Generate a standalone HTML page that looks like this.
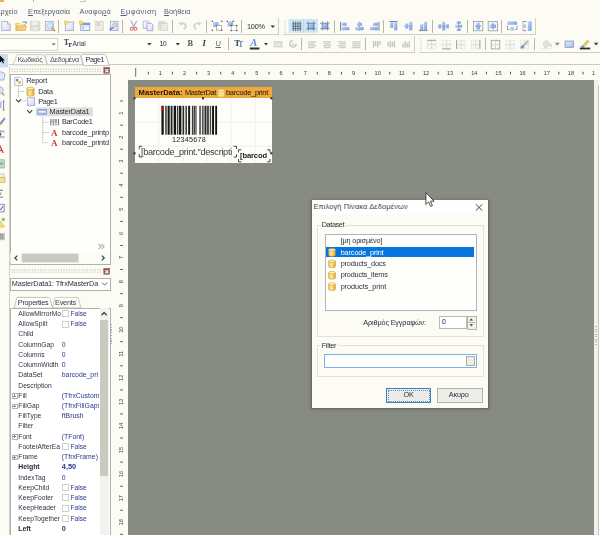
<!DOCTYPE html>
<html><head><meta charset="utf-8"><title>FastReport</title>
<style>
html,body{margin:0;padding:0;background:#fcfcf5}
#root{position:absolute;left:0;top:0;width:600px;height:535px;filter:blur(0.3px)}
body{width:600px;height:535px;overflow:hidden;position:relative;background:#fcfcf5;font-family:"Liberation Sans","DejaVu Sans",sans-serif;font-size:7.2px;color:#3a4150}
.ab{position:absolute}
.t{position:absolute;white-space:nowrap;line-height:10px}
svg{overflow:visible}
</style></head><body><div id="root">

<div class="t" style="left:8px;top:-6.60px;font-size:7.5px;color:#8e929a;letter-spacing:0.051px;">FastReport - barcode_print.fr3</div>
<div class="ab" style="left:0px;top:0px;width:3.5px;height:2.2px;background:#e8b060;"></div>
<div class="t" style="left:-4.5px;top:6.50px;font-size:7.4px;color:#55607a;">Αρχείο</div>
<div class="t" style="left:28px;top:6.50px;font-size:7.4px;color:#55607a;letter-spacing:-0.057px;"><u>Ε</u>πεξεργασία</div>
<div class="t" style="left:79.5px;top:6.50px;font-size:7.4px;color:#55607a;letter-spacing:0.188px;">Αναφο<u>ρ</u>ά</div>
<div class="t" style="left:120.5px;top:6.50px;font-size:7.4px;color:#55607a;letter-spacing:0.462px;"><u>Ε</u>μφάνιση</div>
<div class="t" style="left:164px;top:6.50px;font-size:7.4px;color:#55607a;letter-spacing:-0.001px;"><u>Β</u>οήθεια</div>
<div class="ab" style="left:0px;top:33.5px;width:279px;height:1px;background:#cfcfc4;"></div>
<div class="ab" style="left:278px;top:18px;width:1px;height:16px;background:#cfcfc4;"></div>
<div class="ab" style="left:283px;top:33.5px;width:253px;height:1px;background:#cfcfc4;"></div>
<div class="ab" style="left:535px;top:18px;width:1px;height:16px;background:#cfcfc4;"></div>
<div class="ab" style="left:0px;top:52px;width:414px;height:1px;background:#cfcfc4;"></div>
<div class="ab" style="left:414px;top:36px;width:1px;height:17px;background:#cfcfc4;"></div>
<div class="ab" style="left:419px;top:52px;width:181px;height:1px;background:#cfcfc4;"></div>
<div class="ab" style="left:128px;top:80.3px;width:466.3px;height:455px;background:#888b82;"></div>
<div class="ab" style="left:594.3px;top:80px;width:4px;height:455px;background:#f1f1e8;"></div>
<div class="ab" style="left:598.2px;top:85.4px;width:2px;height:450px;background:#ffffff;"></div>
<div class="ab" style="left:598px;top:85.4px;width:0.6px;height:450px;background:#c4c4ba;"></div>
<div class="ab" style="left:595.2px;top:326.0px;width:2px;height:1.3px;background:#b4b9bc;"></div>
<div class="ab" style="left:595.2px;top:328.5px;width:2px;height:1.3px;background:#b4b9bc;"></div>
<div class="ab" style="left:595.2px;top:331.0px;width:2px;height:1.3px;background:#b4b9bc;"></div>
<div class="ab" style="left:595.2px;top:333.5px;width:2px;height:1.3px;background:#b4b9bc;"></div>
<div class="ab" style="left:595.2px;top:336.0px;width:2px;height:1.3px;background:#b4b9bc;"></div>
<div class="ab" style="left:595.2px;top:338.5px;width:2px;height:1.3px;background:#b4b9bc;"></div>
<div class="ab" style="left:595.2px;top:341.0px;width:2px;height:1.3px;background:#b4b9bc;"></div>
<div class="ab" style="left:595.2px;top:343.5px;width:2px;height:1.3px;background:#b4b9bc;"></div>
<svg class="ab" style="left:0;top:0;opacity:0.880" width="600" height="56" viewBox="0 0 600 56">
<defs><linearGradient id="gb" x1="0" y1="0" x2="1" y2="1"><stop offset="0" stop-color="#c3d4f8"/><stop offset="1" stop-color="#5f8ae0"/></linearGradient><linearGradient id="gp" x1="0" y1="0" x2="1" y2="1"><stop offset="0" stop-color="#ffffff"/><stop offset="1" stop-color="#cfd4f3"/></linearGradient><linearGradient id="gf" x1="0" y1="0" x2="0" y2="1"><stop offset="0" stop-color="#f6d77a"/><stop offset="1" stop-color="#e09a28"/></linearGradient></defs>
<path d="M1.7 21.5h5.8l2.7 2.7v6.3h-8.5z" fill="url(#gp)" stroke="#8e99cf" stroke-width="0.8"/><path d="M7.5 21.5v2.7h2.7" fill="#e8ebfa" stroke="#8e99cf" stroke-width="0.6"/>
<path d="M15.8 23.300h3.600l1 1h5v6h-9.600z" fill="url(#gf)" stroke="#c99a3f" stroke-width="0.5"/><path d="M15.800 30.300l1.500-4.200h9.500l-1.300 4.200z" fill="#f3c766" stroke="#c99a3f" stroke-width="0.4"/><path d="M17 24.800h7" stroke="#fff3c8" stroke-width="0.800"/><path d="M22 22.2q2-1.6 4.2-.4l.6-.9.4 2.6-2.5-.3.7-.7q-1.6-.8-3.400.2z" fill="#5d86d6"/>
<rect x="30.3" y="21.3" width="9.6" height="9.4" rx="0.8" fill="#d6d8ce" stroke="#c6c9bd" stroke-width="0.6"/><rect x="32" y="21.6" width="6" height="3.4" fill="#eeefe8"/><rect x="32.4" y="26.8" width="5.400" height="3.600" fill="#e6e7de"/>
<rect x="45.3" y="21.3" width="8" height="9.2" fill="url(#gp)" stroke="#8e99cf" stroke-width="0.8"/><circle cx="49.8" cy="25.6" r="2.9" fill="#cfe6f8" stroke="#9fbfe4" stroke-width="0.8"/><path d="M52 28l2.600 2.600" stroke="#c98a3a" stroke-width="1.5" stroke-linecap="round"/>
<rect x="65.6" y="22" width="7.8" height="8.6" fill="url(#gp)" stroke="#8e99cf" stroke-width="0.8"/><rect x="64.300" y="21" width="3.2" height="3.2" fill="#f7dc55" stroke="#e3b52d" stroke-width="0.5"/>
<rect x="80.800" y="23" width="9" height="7.6" fill="#eef1fb" stroke="#6f92d6" stroke-width="0.8"/><rect x="80.800" y="23" width="9" height="2.2" fill="#6f92d6"/><rect x="82" y="26.300" width="2.2" height="3" fill="#a9c3f5"/><rect x="79.300" y="21" width="3.2" height="3.2" fill="#f7dc55" stroke="#e3b52d" stroke-width="0.5"/>
<rect x="95.300" y="21.400" width="8" height="9.200" fill="#e8e9e1" stroke="#cdcfc4" stroke-width="0.7"/><path d="M95.600 21.200l4.800 4.800M101 21.200l-4.800 4.800" stroke="#b9bbb0" stroke-width="0.9"/>
<rect x="110.500" y="21.300" width="7.5" height="9.300" fill="url(#gp)" stroke="#8e99cf" stroke-width="0.8"/><circle cx="114.600" cy="24.800" r="2" fill="#d7d9d0" stroke="#9a9c92" stroke-width="0.7"/><path d="M108.800 29.500q1.500-3 4.500-2.500l.8 1.600q-2.500 0-3.200 2.200z" fill="#5d86d6"/>
<path d="M131.200 21.200l3 6.200M136.500 21.200l-3 6.200" stroke="#8fb0e4" stroke-width="1.300" stroke-linecap="round"/><circle cx="131.800" cy="28.700" r="1.500" fill="none" stroke="#d65a5a" stroke-width="1.100"/><circle cx="135.400" cy="28.700" r="1.500" fill="none" stroke="#d65a5a" stroke-width="1.100"/>
<path d="M143.300 21h4.200l1.700 1.700v5.800h-5.900z" fill="url(#gp)" stroke="#8e99cf" stroke-width="0.7"/><path d="M147 23.200h4.200l1.700 1.700v5.800h-5.900z" fill="url(#gp)" stroke="#7b88c6" stroke-width="0.7"/>
<rect x="158.300" y="21.500" width="7" height="8.500" rx="0.6" fill="#d9dbd0" stroke="#c6c8bd" stroke-width="0.6"/><rect x="161" y="23.300" width="6.800" height="7.300" fill="#e9eae2" stroke="#c6c8bd" stroke-width="0.6"/>
<path d="M180 24.200q3.500-1.800 5.400.6q1.200 2.200-1.500 4.600" fill="none" stroke="#cbcdc2" stroke-width="1.800"/><path d="M178.200 22.800l3.600-.8-.5 3.700z" fill="#cbcdc2"/>
<path d="M200 24.200q-3.500-1.800-5.400.6q-1.200 2.200 1.500 4.600" fill="none" stroke="#cbcdc2" stroke-width="1.800"/><path d="M201.800 22.800l-3.600-.8.500 3.700z" fill="#cbcdc2"/>
<rect x="213" y="22" width="5.500" height="5" fill="url(#gb)"/><rect x="216.500" y="25.500" width="5" height="4.600" fill="#fff" stroke="#555" stroke-width="0.500"/>
<rect x="211.7" y="20.6" width="1.300" height="1.300" fill="#333"/>
<rect x="221.1" y="20.6" width="1.300" height="1.300" fill="#333"/>
<rect x="211.7" y="29.6" width="1.300" height="1.300" fill="#333"/>
<rect x="221.1" y="29.6" width="1.300" height="1.300" fill="#333"/>
<rect x="227.500" y="21.500" width="5.500" height="4.800" fill="url(#gb)"/><rect x="231.300" y="25.800" width="5.200" height="4.600" fill="#fff" stroke="#666" stroke-width="0.400"/>
<rect x="230.4" y="24.9" width="1.300" height="1.300" fill="#333"/>
<rect x="236.2" y="24.9" width="1.300" height="1.300" fill="#333"/>
<rect x="230.4" y="29.9" width="1.300" height="1.300" fill="#333"/>
<rect x="236.2" y="29.9" width="1.300" height="1.300" fill="#333"/>
<rect x="226.7" y="20.7" width="1.300" height="1.300" fill="#333"/>
<rect x="232.6" y="20.7" width="1.300" height="1.300" fill="#333"/>
<path d="M270.500 25.400h4.600l-2.300 2.600z" fill="#222"/>
<rect x="284.600" y="20" width="1" height="1" fill="#c3c3b8"/>
<rect x="284.600" y="22" width="1" height="1" fill="#c3c3b8"/>
<rect x="284.600" y="24" width="1" height="1" fill="#c3c3b8"/>
<rect x="284.600" y="26" width="1" height="1" fill="#c3c3b8"/>
<rect x="284.600" y="28" width="1" height="1" fill="#c3c3b8"/>
<rect x="284.600" y="30" width="1" height="1" fill="#c3c3b8"/>
<rect x="284.600" y="32" width="1" height="1" fill="#c3c3b8"/>
<rect x="288.500" y="19" width="29.600" height="13.700" fill="#c5e2f8"/><rect x="303.200" y="19" width="0.700" height="13.700" fill="#a9d0ee"/>
<path d="M293.3 21.500v9.500" stroke="#3d4650" stroke-width="0.900"/>
<path d="M295.6 21.500v9.500" stroke="#3d4650" stroke-width="0.900"/>
<path d="M297.9 21.500v9.500" stroke="#3d4650" stroke-width="0.900"/>
<path d="M300.2 21.500v9.500" stroke="#3d4650" stroke-width="0.900"/>
<path d="M292 23.8h9.500" stroke="#4a535e" stroke-width="0.800"/>
<path d="M292 26.2h9.500" stroke="#4a535e" stroke-width="0.800"/>
<path d="M292 28.6h9.500" stroke="#4a535e" stroke-width="0.800"/>
<rect x="307.300" y="22.400" width="7.200" height="7.200" fill="url(#gb)"/>
<path d="M308.3 21.300v9.600" stroke="#4a535e" stroke-width="0.700" opacity="0.800"/>
<path d="M313.7 21.300v9.600" stroke="#4a535e" stroke-width="0.700" opacity="0.800"/>
<path d="M306.200 23.3h9.600" stroke="#4a535e" stroke-width="0.700" opacity="0.800"/>
<path d="M306.200 28.7h9.600" stroke="#4a535e" stroke-width="0.700" opacity="0.800"/>
<rect x="321.600" y="22.600" width="6.800" height="6.800" fill="url(#gb)"/>
<path d="M322.3 21.300v9.600" stroke="#4a535e" stroke-width="0.800" stroke-dasharray="1.500 0.800"/>
<path d="M327.7 21.300v9.600" stroke="#4a535e" stroke-width="0.800" stroke-dasharray="1.500 0.800"/>
<path d="M320.200 23.3h9.600" stroke="#4a535e" stroke-width="0.800" stroke-dasharray="1.500 0.800"/>
<path d="M320.200 28.7h9.600" stroke="#4a535e" stroke-width="0.800" stroke-dasharray="1.500 0.800"/>
<path d="M340.500 21.800v9" stroke="#555" stroke-width="0.800"/><rect x="341.500" y="22.500" width="5" height="3.300" fill="url(#gb)"/><rect x="341.500" y="26.800" width="7.800" height="3.400" fill="url(#gb)"/>
<path d="M359.500 21.800v9" stroke="#555" stroke-width="0.700"/><rect x="357" y="22.500" width="5" height="3.300" fill="url(#gb)"/><rect x="355.300" y="26.800" width="8.400" height="3.400" fill="url(#gb)"/>
<path d="M379 21.800v9" stroke="#555" stroke-width="0.800"/><rect x="373" y="22.500" width="5" height="3.300" fill="url(#gb)"/><rect x="370" y="26.800" width="8" height="3.400" fill="url(#gb)"/>
<path d="M389.200 21.500h8.500" stroke="#555" stroke-width="0.800"/><rect x="390" y="22.300" width="3.200" height="5.500" fill="url(#gb)"/><rect x="394" y="22.300" width="3.300" height="8" fill="url(#gb)"/>
<path d="M404.200 26h8.500" stroke="#555" stroke-width="0.600"/><rect x="405" y="23.500" width="3.200" height="5" fill="url(#gb)"/><rect x="409" y="21.800" width="3.300" height="8.500" fill="url(#gb)"/>
<path d="M418.800 30.600h8.800" stroke="#555" stroke-width="0.800"/><rect x="420" y="24.300" width="3.200" height="5.700" fill="url(#gb)"/><rect x="423.800" y="21.800" width="3.300" height="8.200" fill="url(#gb)"/>
<rect x="438.300" y="24" width="2.600" height="4.500" fill="url(#gb)"/><rect x="442" y="21.800" width="3.200" height="8.600" fill="url(#gb)"/><rect x="446.200" y="24" width="2.600" height="4.500" fill="url(#gb)"/><path d="M438 26.200h11" stroke="#666" stroke-width="0.500"/>
<rect x="456.500" y="21.300" width="4.500" height="2.400" fill="url(#gb)"/><rect x="455.200" y="24.700" width="7" height="2.800" fill="url(#gb)"/><rect x="456.500" y="28.500" width="4.500" height="2.400" fill="url(#gb)"/><path d="M458.700 21v10" stroke="#666" stroke-width="0.500"/>
<rect x="473.400" y="21.400" width="9.400" height="9.400" fill="#f4f6f2" stroke="#7f9098" stroke-width="0.800"/><rect x="476.400" y="22.800" width="3.400" height="6.600" fill="url(#gb)"/><rect x="475.500" y="25" width="5.200" height="2.200" fill="#7ba0ea"/>
<rect x="488.200" y="21.400" width="9.400" height="9.400" fill="#f4f6f2" stroke="#7f9098" stroke-width="0.800"/><rect x="489.800" y="24.400" width="6.200" height="3.400" fill="url(#gb)"/><rect x="491.800" y="23.300" width="2.200" height="5.600" fill="#7ba0ea"/>
<rect x="507.300" y="21.300" width="9.800" height="3.400" fill="url(#gb)"/><rect x="510.300" y="26.800" width="3.800" height="3.800" fill="#a9c3f5"/><path d="M507.500 25.500v4h2M517 25.500v4h-2" stroke="#444" stroke-width="0.600" fill="none"/>
<rect x="527.800" y="21.300" width="3.800" height="9.600" fill="url(#gb)"/><rect x="522.300" y="24.300" width="3.800" height="3.800" fill="#a9c3f5"/><path d="M526.500 21.500h-3.500v2M526.500 30.700h-3.500v-2" stroke="#444" stroke-width="0.600" fill="none"/>
<rect x="-1" y="38.600" width="58.700" height="11.700" fill="#fefefb" stroke="#c4c4b9" stroke-width="0.800"/><path d="M51.500 43.300h4.400l-2.200 2.500z" fill="#777a80"/>
<rect x="60" y="36.500" width="95" height="14.500" fill="#fefefa"/><rect x="156" y="36.500" width="26" height="14.500" fill="#fefefa"/>
<path d="M147.200 43h4.400l-2.200 2.600z" fill="#222"/><path d="M175.600 43h4.400l-2.200 2.600z" fill="#222"/><path d="M264 43h4l-2 2.500z" fill="#222"/>
<rect x="249.800" y="47.500" width="9.600" height="2" fill="#111"/>
<rect x="273.800" y="41" width="8.600" height="6.500" fill="#d3d5ca"/><rect x="275.300" y="42.600" width="2" height="3.300" fill="#e8e9e0"/><rect x="278.500" y="42.600" width="2" height="3.300" fill="#e8e9e0"/>
<circle cx="293" cy="43.800" r="3.200" fill="none" stroke="#c6c8bd" stroke-width="1.500" stroke-dasharray="15 5"/><path d="M289 44h3.500v-1.500l2.500 2-2.500 2v-1.300h-3.500z" fill="#d8d9cf"/>
<rect x="308.0" y="41.4" width="8.2" height="1.100" fill="#bdbfb4"/>
<rect x="308.0" y="43.3" width="6.5" height="1.100" fill="#bdbfb4"/>
<rect x="308.0" y="45.2" width="8.2" height="1.100" fill="#bdbfb4"/>
<rect x="308.0" y="47.1" width="6.5" height="1.100" fill="#bdbfb4"/>
<rect x="323.0" y="41.4" width="8.2" height="1.100" fill="#bdbfb4"/>
<rect x="324.1" y="43.3" width="6" height="1.100" fill="#bdbfb4"/>
<rect x="323.0" y="45.2" width="8.2" height="1.100" fill="#bdbfb4"/>
<rect x="324.1" y="47.1" width="6" height="1.100" fill="#bdbfb4"/>
<rect x="337.6" y="41.4" width="8.2" height="1.100" fill="#bdbfb4"/>
<rect x="339.3" y="43.3" width="6.5" height="1.100" fill="#bdbfb4"/>
<rect x="337.6" y="45.2" width="8.2" height="1.100" fill="#bdbfb4"/>
<rect x="339.3" y="47.1" width="6.5" height="1.100" fill="#bdbfb4"/>
<rect x="352.3" y="41.4" width="8.2" height="1.100" fill="#bdbfb4"/>
<rect x="352.3" y="43.3" width="8.2" height="1.100" fill="#bdbfb4"/>
<rect x="352.3" y="45.2" width="8.2" height="1.100" fill="#bdbfb4"/>
<rect x="352.3" y="47.1" width="8.2" height="1.100" fill="#bdbfb4"/>
<rect x="373.0" y="41.0" width="1.200" height="6.5" fill="#b4b6ab"/>
<rect x="375.1" y="41.0" width="1.200" height="5" fill="#b4b6ab"/>
<rect x="377.2" y="41.0" width="1.200" height="6.5" fill="#b4b6ab"/>
<rect x="379.3" y="41.0" width="1.200" height="4" fill="#b4b6ab"/>
<rect x="387.5" y="42.0" width="1.200" height="4.5" fill="#b4b6ab"/>
<rect x="389.6" y="41.0" width="1.200" height="6.5" fill="#b4b6ab"/>
<rect x="391.7" y="41.8" width="1.200" height="5" fill="#b4b6ab"/>
<rect x="393.8" y="41.0" width="1.200" height="6.5" fill="#b4b6ab"/>
<rect x="402.3" y="43.6" width="1.200" height="4" fill="#b4b6ab"/>
<rect x="404.4" y="41.1" width="1.200" height="6.5" fill="#b4b6ab"/>
<rect x="406.5" y="42.6" width="1.200" height="5" fill="#b4b6ab"/>
<rect x="408.6" y="41.1" width="1.200" height="6.5" fill="#b4b6ab"/>
<rect x="420.500" y="38" width="1" height="1" fill="#c3c3b8"/>
<rect x="420.500" y="40" width="1" height="1" fill="#c3c3b8"/>
<rect x="420.500" y="42" width="1" height="1" fill="#c3c3b8"/>
<rect x="420.500" y="44" width="1" height="1" fill="#c3c3b8"/>
<rect x="420.500" y="46" width="1" height="1" fill="#c3c3b8"/>
<rect x="420.500" y="48" width="1" height="1" fill="#c3c3b8"/>
<rect x="420.500" y="50" width="1" height="1" fill="#c3c3b8"/>
<rect x="427.3" y="40.3" width="8.6" height="8.6" fill="#f7f8f3" stroke="#d0d2c8" stroke-width="0.700" stroke-dasharray="1 0.600"/>
<path d="M431.6 40.3v8.6M427.3 44.6h8.6" stroke="#cfd1c6" stroke-width="0.800"/>
<path d="M427.3 40.3h8.6" stroke="#8a9aa0" stroke-width="1"/>
<rect x="442.2" y="40.3" width="8.6" height="8.6" fill="#f7f8f3" stroke="#d0d2c8" stroke-width="0.700" stroke-dasharray="1 0.600"/>
<path d="M446.5 40.3v8.6M442.2 44.6h8.6" stroke="#cfd1c6" stroke-width="0.800"/>
<path d="M442.2 48.9h8.6" stroke="#8a9aa0" stroke-width="1"/>
<rect x="456.6" y="40.3" width="8.6" height="8.6" fill="#f7f8f3" stroke="#d0d2c8" stroke-width="0.700" stroke-dasharray="1 0.600"/>
<path d="M460.9 40.3v8.6M456.6 44.6h8.6" stroke="#cfd1c6" stroke-width="0.800"/>
<path d="M456.6 40.3v8.6" stroke="#8a9aa0" stroke-width="1"/>
<rect x="471.3" y="40.3" width="8.6" height="8.6" fill="#f7f8f3" stroke="#d0d2c8" stroke-width="0.700" stroke-dasharray="1 0.600"/>
<path d="M475.6 40.3v8.6M471.3 44.6h8.6" stroke="#cfd1c6" stroke-width="0.800"/>
<path d="M479.90000000000003 40.3v8.6" stroke="#8a9aa0" stroke-width="1"/>
<rect x="491.2" y="40.3" width="8.6" height="8.6" fill="#f7f8f3" stroke="#d0d2c8" stroke-width="0.700" stroke-dasharray="1 0.600"/>
<path d="M495.5 40.3v8.6M491.2 44.6h8.6" stroke="#cfd1c6" stroke-width="0.800"/>
<rect x="491.2" y="40.3" width="8.6" height="8.6" fill="none" stroke="#8c9ca2" stroke-width="0.800"/>
<rect x="505.8" y="40.3" width="8.6" height="8.6" fill="#f7f8f3" stroke="#d0d2c8" stroke-width="0.700" stroke-dasharray="1 0.600"/>
<path d="M510.1 40.3v8.6M505.8 44.6h8.6" stroke="#cfd1c6" stroke-width="0.800"/>
<rect x="520.3" y="40.3" width="8.6" height="8.6" fill="#f7f8f3" stroke="#d0d2c8" stroke-width="0.700" stroke-dasharray="1 0.600"/>
<path d="M524.6 40.3v8.6M520.3 44.6h8.6" stroke="#cfd1c6" stroke-width="0.800"/>
<path d="M521.500 47.500l6-6" stroke="#b0b2a8" stroke-width="2.200" stroke-linecap="round"/><circle cx="522.300" cy="47" r="1.600" fill="#4f7fe0"/>
<path d="M543 43.500l3.500-3.500 4 4-3.800 3.800h-2z" fill="#dfe0d7" stroke="#c3c5ba" stroke-width="0.700"/><path d="M550.500 43.500q1.800 1.500.600 4q-1.300-1.600-.600-4z" fill="#b9bbb0"/><rect x="541" y="48.300" width="10" height="0.900" fill="#d9e6cf"/>
<path d="M554.800 42.800h5l-2.500 3z" fill="#7d6f9c"/>
<rect x="565" y="41" width="8.600" height="6.400" fill="url(#gb)" stroke="#7d8cc4" stroke-width="0.700"/><rect x="565.800" y="41.800" width="7" height="4.800" fill="#dfe8fb" opacity="0.600"/>
<path d="M582 46l5.500-6 1.800 1.500-5.500 6z" fill="#e7bf5a" stroke="#b98f35" stroke-width="0.400"/><path d="M580.500 46.800l2-1.500 1.700 1.500-1.500 1.200z" fill="#5d86d6"/><rect x="579.800" y="47.600" width="10.400" height="1.800" fill="#111"/>
<path d="M593.800 42.800h4.600l-2.300 2.800z" fill="#222"/>
</svg>
<div class="ab" style="left:58.25px;top:19.5px;width:1px;height:13.0px;background:#b6b6aa;"></div>
<div class="ab" style="left:122.4px;top:19.5px;width:1px;height:13.0px;background:#b6b6aa;"></div>
<div class="ab" style="left:172.0px;top:19.5px;width:1px;height:13.0px;background:#b6b6aa;"></div>
<div class="ab" style="left:206.0px;top:19.5px;width:1px;height:13.0px;background:#b6b6aa;"></div>
<div class="ab" style="left:240.5px;top:19.5px;width:1px;height:13.0px;background:#b6b6aa;"></div>
<div class="ab" style="left:333.9px;top:19.5px;width:1px;height:13.0px;background:#b6b6aa;"></div>
<div class="ab" style="left:382.9px;top:19.5px;width:1px;height:13.0px;background:#b6b6aa;"></div>
<div class="ab" style="left:432.2px;top:19.5px;width:1px;height:13.0px;background:#b6b6aa;"></div>
<div class="ab" style="left:466.9px;top:19.5px;width:1px;height:13.0px;background:#b6b6aa;"></div>
<div class="ab" style="left:501.0px;top:19.5px;width:1px;height:13.0px;background:#b6b6aa;"></div>
<div class="ab" style="left:228.0px;top:38.4px;width:1px;height:11.899999999999999px;background:#b6b6aa;"></div>
<div class="ab" style="left:300.7px;top:38.4px;width:1px;height:11.899999999999999px;background:#b6b6aa;"></div>
<div class="ab" style="left:365.1px;top:38.4px;width:1px;height:11.899999999999999px;background:#b6b6aa;"></div>
<div class="ab" style="left:484.7px;top:38.4px;width:1px;height:11.899999999999999px;background:#b6b6aa;"></div>
<div class="ab" style="left:533.9px;top:38.4px;width:1px;height:11.899999999999999px;background:#b6b6aa;"></div>
<div class="t" style="left:247px;top:21.50px;font-size:7.3px;color:#2a303c;letter-spacing:-0.218px;">100%</div>
<div class="t" style="left:72.5px;top:39.40px;font-size:6.7px;color:#2a303c;letter-spacing:-0.021px;">Arial</div>
<div class="t" style="left:159.6px;top:39.40px;font-size:7px;color:#2a303c;letter-spacing:-0.793px;">10</div>
<div class="t" style="left:63.8px;top:38.30px;font-size:7.8px;color:#444;font-weight:bold;font-family:'Liberation Serif',serif;">T</div>
<div class="t" style="left:67.6px;top:39.80px;font-size:6.8px;color:#222;font-weight:bold;font-family:'Liberation Serif',serif;">T</div>
<div class="t" style="left:187.5px;top:39.20px;font-size:8.3px;color:#555;font-weight:bold;font-family:'Liberation Serif',serif;">B</div>
<div class="t" style="left:202.5px;top:39.20px;font-size:8.3px;color:#333;font-weight:bold;font-style:italic;font-family:'Liberation Serif',serif;">I</div>
<div class="t" style="left:215.5px;top:39.20px;font-size:7.6px;color:#666;text-decoration:underline;">U</div>
<div class="t" style="left:234.2px;top:38.30px;font-size:9px;color:#2f5070;font-weight:bold;font-family:'Liberation Serif',serif;">T</div>
<div class="t" style="left:238.3px;top:39.90px;font-size:7.5px;color:#6d83b6;font-weight:bold;font-family:'Liberation Serif',serif;">T</div>
<div class="t" style="left:250.3px;top:38.00px;font-size:10.5px;color:#6489dc;font-weight:bold;font-style:italic;font-family:'Liberation Serif',serif;">A</div>
<div class="ab" style="left:9px;top:64.3px;width:591px;height:1px;background:#c9c9be;"></div>
<svg class="ab" style="left:0;top:0" width="130" height="80" viewBox="0 0 130 80">
<path d="M13 64.800l3.600-9.200q.4-1 1.500-1h25q1 0 1.400 1l2.500 9.200z" fill="#fcfcf5" stroke="#b9b9ae" stroke-width="0.700"/>
<path d="M47.500 64.800l-2.400-9.200q.2-1 1.500-1h32.500q1 0 1.400 1l2.500 9.200z" fill="#fcfcf5" stroke="#b9b9ae" stroke-width="0.700"/>
<path d="M83.500 65.500l-2.400-9.900q.2-1.200 1.500-1.200h22q1 0 1.400 1l3.200 10.100z" fill="#ffffff" stroke="#a9a99e" stroke-width="0.700"/>
<rect x="0" y="54" width="8" height="13.300" fill="#c9e0f7"/>
<path d="M0 55.500v7l1.700-1.500 1.300 2.600 1.100-.5-1.300-2.600h2.200z" fill="#111"/>
<rect x="11.3" y="68.5" width="1.300" height="1.200" fill="#c9c9be"/><rect x="11.3" y="70.9" width="1.300" height="1.200" fill="#cfcfc5"/>
<rect x="13.9" y="68.5" width="1.300" height="1.200" fill="#c9c9be"/><rect x="13.9" y="70.9" width="1.300" height="1.200" fill="#cfcfc5"/>
<rect x="16.5" y="68.5" width="1.300" height="1.200" fill="#c9c9be"/><rect x="16.5" y="70.9" width="1.300" height="1.200" fill="#cfcfc5"/>
<rect x="19.1" y="68.5" width="1.300" height="1.200" fill="#c9c9be"/><rect x="19.1" y="70.9" width="1.300" height="1.200" fill="#cfcfc5"/>
<rect x="21.7" y="68.5" width="1.300" height="1.200" fill="#c9c9be"/><rect x="21.7" y="70.9" width="1.300" height="1.200" fill="#cfcfc5"/>
<rect x="24.3" y="68.5" width="1.300" height="1.200" fill="#c9c9be"/><rect x="24.3" y="70.9" width="1.300" height="1.200" fill="#cfcfc5"/>
<rect x="26.9" y="68.5" width="1.300" height="1.200" fill="#c9c9be"/><rect x="26.9" y="70.9" width="1.300" height="1.200" fill="#cfcfc5"/>
<rect x="29.5" y="68.5" width="1.300" height="1.200" fill="#c9c9be"/><rect x="29.5" y="70.9" width="1.300" height="1.200" fill="#cfcfc5"/>
<rect x="32.1" y="68.5" width="1.300" height="1.200" fill="#c9c9be"/><rect x="32.1" y="70.9" width="1.300" height="1.200" fill="#cfcfc5"/>
<rect x="34.7" y="68.5" width="1.300" height="1.200" fill="#c9c9be"/><rect x="34.7" y="70.9" width="1.300" height="1.200" fill="#cfcfc5"/>
<rect x="37.3" y="68.5" width="1.300" height="1.200" fill="#c9c9be"/><rect x="37.3" y="70.9" width="1.300" height="1.200" fill="#cfcfc5"/>
<rect x="39.9" y="68.5" width="1.300" height="1.200" fill="#c9c9be"/><rect x="39.9" y="70.9" width="1.300" height="1.200" fill="#cfcfc5"/>
<rect x="42.5" y="68.5" width="1.300" height="1.200" fill="#c9c9be"/><rect x="42.5" y="70.9" width="1.300" height="1.200" fill="#cfcfc5"/>
<rect x="45.1" y="68.5" width="1.300" height="1.200" fill="#c9c9be"/><rect x="45.1" y="70.9" width="1.300" height="1.200" fill="#cfcfc5"/>
<rect x="47.7" y="68.5" width="1.300" height="1.200" fill="#c9c9be"/><rect x="47.7" y="70.9" width="1.300" height="1.200" fill="#cfcfc5"/>
<rect x="50.3" y="68.5" width="1.300" height="1.200" fill="#c9c9be"/><rect x="50.3" y="70.9" width="1.300" height="1.200" fill="#cfcfc5"/>
<rect x="52.9" y="68.5" width="1.300" height="1.200" fill="#c9c9be"/><rect x="52.9" y="70.9" width="1.300" height="1.200" fill="#cfcfc5"/>
<rect x="55.5" y="68.5" width="1.300" height="1.200" fill="#c9c9be"/><rect x="55.5" y="70.9" width="1.300" height="1.200" fill="#cfcfc5"/>
<rect x="58.1" y="68.5" width="1.300" height="1.200" fill="#c9c9be"/><rect x="58.1" y="70.9" width="1.300" height="1.200" fill="#cfcfc5"/>
<rect x="60.7" y="68.5" width="1.300" height="1.200" fill="#c9c9be"/><rect x="60.7" y="70.9" width="1.300" height="1.200" fill="#cfcfc5"/>
<rect x="63.3" y="68.5" width="1.300" height="1.200" fill="#c9c9be"/><rect x="63.3" y="70.9" width="1.300" height="1.200" fill="#cfcfc5"/>
<rect x="65.9" y="68.5" width="1.300" height="1.200" fill="#c9c9be"/><rect x="65.9" y="70.9" width="1.300" height="1.200" fill="#cfcfc5"/>
<rect x="68.5" y="68.5" width="1.300" height="1.200" fill="#c9c9be"/><rect x="68.5" y="70.9" width="1.300" height="1.200" fill="#cfcfc5"/>
<rect x="71.1" y="68.5" width="1.300" height="1.200" fill="#c9c9be"/><rect x="71.1" y="70.9" width="1.300" height="1.200" fill="#cfcfc5"/>
<rect x="73.7" y="68.5" width="1.300" height="1.200" fill="#c9c9be"/><rect x="73.7" y="70.9" width="1.300" height="1.200" fill="#cfcfc5"/>
<rect x="76.3" y="68.5" width="1.300" height="1.200" fill="#c9c9be"/><rect x="76.3" y="70.9" width="1.300" height="1.200" fill="#cfcfc5"/>
<rect x="78.9" y="68.5" width="1.300" height="1.200" fill="#c9c9be"/><rect x="78.9" y="70.9" width="1.300" height="1.200" fill="#cfcfc5"/>
<rect x="81.5" y="68.5" width="1.300" height="1.200" fill="#c9c9be"/><rect x="81.5" y="70.9" width="1.300" height="1.200" fill="#cfcfc5"/>
<rect x="84.1" y="68.5" width="1.300" height="1.200" fill="#c9c9be"/><rect x="84.1" y="70.9" width="1.300" height="1.200" fill="#cfcfc5"/>
<rect x="86.7" y="68.5" width="1.300" height="1.200" fill="#c9c9be"/><rect x="86.7" y="70.9" width="1.300" height="1.200" fill="#cfcfc5"/>
<rect x="89.3" y="68.5" width="1.300" height="1.200" fill="#c9c9be"/><rect x="89.3" y="70.9" width="1.300" height="1.200" fill="#cfcfc5"/>
<rect x="91.9" y="68.5" width="1.300" height="1.200" fill="#c9c9be"/><rect x="91.9" y="70.9" width="1.300" height="1.200" fill="#cfcfc5"/>
<rect x="94.5" y="68.5" width="1.300" height="1.200" fill="#c9c9be"/><rect x="94.5" y="70.9" width="1.300" height="1.200" fill="#cfcfc5"/>
<rect x="97.1" y="68.5" width="1.300" height="1.200" fill="#c9c9be"/><rect x="97.1" y="70.9" width="1.300" height="1.200" fill="#cfcfc5"/>
<rect x="99.7" y="68.5" width="1.300" height="1.200" fill="#c9c9be"/><rect x="99.7" y="70.9" width="1.300" height="1.200" fill="#cfcfc5"/>
<rect x="11.3" y="269.2" width="1.300" height="1.200" fill="#c9c9be"/><rect x="11.3" y="271.6" width="1.300" height="1.200" fill="#cfcfc5"/>
<rect x="13.9" y="269.2" width="1.300" height="1.200" fill="#c9c9be"/><rect x="13.9" y="271.6" width="1.300" height="1.200" fill="#cfcfc5"/>
<rect x="16.5" y="269.2" width="1.300" height="1.200" fill="#c9c9be"/><rect x="16.5" y="271.6" width="1.300" height="1.200" fill="#cfcfc5"/>
<rect x="19.1" y="269.2" width="1.300" height="1.200" fill="#c9c9be"/><rect x="19.1" y="271.6" width="1.300" height="1.200" fill="#cfcfc5"/>
<rect x="21.7" y="269.2" width="1.300" height="1.200" fill="#c9c9be"/><rect x="21.7" y="271.6" width="1.300" height="1.200" fill="#cfcfc5"/>
<rect x="24.3" y="269.2" width="1.300" height="1.200" fill="#c9c9be"/><rect x="24.3" y="271.6" width="1.300" height="1.200" fill="#cfcfc5"/>
<rect x="26.9" y="269.2" width="1.300" height="1.200" fill="#c9c9be"/><rect x="26.9" y="271.6" width="1.300" height="1.200" fill="#cfcfc5"/>
<rect x="29.5" y="269.2" width="1.300" height="1.200" fill="#c9c9be"/><rect x="29.5" y="271.6" width="1.300" height="1.200" fill="#cfcfc5"/>
<rect x="32.1" y="269.2" width="1.300" height="1.200" fill="#c9c9be"/><rect x="32.1" y="271.6" width="1.300" height="1.200" fill="#cfcfc5"/>
<rect x="34.7" y="269.2" width="1.300" height="1.200" fill="#c9c9be"/><rect x="34.7" y="271.6" width="1.300" height="1.200" fill="#cfcfc5"/>
<rect x="37.3" y="269.2" width="1.300" height="1.200" fill="#c9c9be"/><rect x="37.3" y="271.6" width="1.300" height="1.200" fill="#cfcfc5"/>
<rect x="39.9" y="269.2" width="1.300" height="1.200" fill="#c9c9be"/><rect x="39.9" y="271.6" width="1.300" height="1.200" fill="#cfcfc5"/>
<rect x="42.5" y="269.2" width="1.300" height="1.200" fill="#c9c9be"/><rect x="42.5" y="271.6" width="1.300" height="1.200" fill="#cfcfc5"/>
<rect x="45.1" y="269.2" width="1.300" height="1.200" fill="#c9c9be"/><rect x="45.1" y="271.6" width="1.300" height="1.200" fill="#cfcfc5"/>
<rect x="47.7" y="269.2" width="1.300" height="1.200" fill="#c9c9be"/><rect x="47.7" y="271.6" width="1.300" height="1.200" fill="#cfcfc5"/>
<rect x="50.3" y="269.2" width="1.300" height="1.200" fill="#c9c9be"/><rect x="50.3" y="271.6" width="1.300" height="1.200" fill="#cfcfc5"/>
<rect x="52.9" y="269.2" width="1.300" height="1.200" fill="#c9c9be"/><rect x="52.9" y="271.6" width="1.300" height="1.200" fill="#cfcfc5"/>
<rect x="55.5" y="269.2" width="1.300" height="1.200" fill="#c9c9be"/><rect x="55.5" y="271.6" width="1.300" height="1.200" fill="#cfcfc5"/>
<rect x="58.1" y="269.2" width="1.300" height="1.200" fill="#c9c9be"/><rect x="58.1" y="271.6" width="1.300" height="1.200" fill="#cfcfc5"/>
<rect x="60.7" y="269.2" width="1.300" height="1.200" fill="#c9c9be"/><rect x="60.7" y="271.6" width="1.300" height="1.200" fill="#cfcfc5"/>
<rect x="63.3" y="269.2" width="1.300" height="1.200" fill="#c9c9be"/><rect x="63.3" y="271.6" width="1.300" height="1.200" fill="#cfcfc5"/>
<rect x="65.9" y="269.2" width="1.300" height="1.200" fill="#c9c9be"/><rect x="65.9" y="271.6" width="1.300" height="1.200" fill="#cfcfc5"/>
<rect x="68.5" y="269.2" width="1.300" height="1.200" fill="#c9c9be"/><rect x="68.5" y="271.6" width="1.300" height="1.200" fill="#cfcfc5"/>
<rect x="71.1" y="269.2" width="1.300" height="1.200" fill="#c9c9be"/><rect x="71.1" y="271.6" width="1.300" height="1.200" fill="#cfcfc5"/>
<rect x="73.7" y="269.2" width="1.300" height="1.200" fill="#c9c9be"/><rect x="73.7" y="271.6" width="1.300" height="1.200" fill="#cfcfc5"/>
<rect x="76.3" y="269.2" width="1.300" height="1.200" fill="#c9c9be"/><rect x="76.3" y="271.6" width="1.300" height="1.200" fill="#cfcfc5"/>
<rect x="78.9" y="269.2" width="1.300" height="1.200" fill="#c9c9be"/><rect x="78.9" y="271.6" width="1.300" height="1.200" fill="#cfcfc5"/>
<rect x="81.5" y="269.2" width="1.300" height="1.200" fill="#c9c9be"/><rect x="81.5" y="271.6" width="1.300" height="1.200" fill="#cfcfc5"/>
<rect x="84.1" y="269.2" width="1.300" height="1.200" fill="#c9c9be"/><rect x="84.1" y="271.6" width="1.300" height="1.200" fill="#cfcfc5"/>
<rect x="86.7" y="269.2" width="1.300" height="1.200" fill="#c9c9be"/><rect x="86.7" y="271.6" width="1.300" height="1.200" fill="#cfcfc5"/>
<rect x="89.3" y="269.2" width="1.300" height="1.200" fill="#c9c9be"/><rect x="89.3" y="271.6" width="1.300" height="1.200" fill="#cfcfc5"/>
<rect x="91.9" y="269.2" width="1.300" height="1.200" fill="#c9c9be"/><rect x="91.9" y="271.6" width="1.300" height="1.200" fill="#cfcfc5"/>
<rect x="94.5" y="269.2" width="1.300" height="1.200" fill="#c9c9be"/><rect x="94.5" y="271.6" width="1.300" height="1.200" fill="#cfcfc5"/>
<rect x="97.1" y="269.2" width="1.300" height="1.200" fill="#c9c9be"/><rect x="97.1" y="271.6" width="1.300" height="1.200" fill="#cfcfc5"/>
<rect x="99.7" y="269.2" width="1.300" height="1.200" fill="#c9c9be"/><rect x="99.7" y="271.6" width="1.300" height="1.200" fill="#cfcfc5"/>
<rect x="103.800" y="67.6" width="5.800" height="5.600" fill="#8c5860" stroke="#7a5058" stroke-width="0.500"/><path d="M103.800 68.1h5.800" stroke="#b04848" stroke-width="1"/><path d="M105.200 69.2l3.200 3.200M108.400 69.2l-3.200 3.200" stroke="#ffffff" stroke-width="1.100"/>
<rect x="103.800" y="268.6" width="5.800" height="5.600" fill="#8c5860" stroke="#7a5058" stroke-width="0.500"/><path d="M103.800 269.1h5.800" stroke="#b04848" stroke-width="1"/><path d="M105.200 270.2l3.200 3.200M108.400 270.2l-3.200 3.200" stroke="#ffffff" stroke-width="1.100"/>
</svg>
<div class="t" style="left:17.6px;top:55.00px;font-size:7.3px;color:#4a5266;letter-spacing:-0.358px;">Κωδικός</div>
<div class="t" style="left:50px;top:55.00px;font-size:7.3px;color:#4a5266;letter-spacing:-0.323px;">Δεδομένα</div>
<div class="t" style="left:85.6px;top:55.00px;font-size:7.3px;color:#2e3442;letter-spacing:-0.542px;">Page1</div>
<div class="ab" style="left:9px;top:67px;width:1px;height:468px;background:#d3d3c8;"></div>
<svg class="ab" style="left:0;top:66px;overflow:hidden" width="8" height="200" viewBox="0 66 8 200">
<path d="M-3 74l4-2.300 4 2-1.200 6.300h-6z" fill="#e4e8fb" stroke="#8f9dd4" stroke-width="0.800"/>
<circle cx="-0.500" cy="90.300" r="3.700" fill="#d4e8f8" stroke="#9ab2da" stroke-width="0.900"/><path d="M2.300 93.200l2 2.200" stroke="#c4924a" stroke-width="1.400"/>
<rect x="-2" y="101.500" width="3.600" height="6.600" fill="#a9c3f5"/><path d="M3.600 101v9M2.600 101h2M2.600 110h2" stroke="#556" stroke-width="0.700"/>
<path d="M-0.500 123.300l4.600-5.800 1.400 1.200-4.300 5.800z" fill="#7686c4"/><path d="M-2 124.300l2.600-1.200 1 1.500-2 1.200z" fill="#e0b040"/>
<path d="M0.800 130v8M0.800 131.500h3M0.800 137h3" stroke="#778" stroke-width="0.700"/><rect x="2.300" y="130.300" width="2.400" height="2.200" fill="#a9c3f5"/><rect x="2.300" y="136" width="2.400" height="2.200" fill="#a9c3f5"/><rect x="-1" y="133.400" width="1.800" height="1.800" fill="#222"/>
<path d="M-3.400 153l3.300-7.200 3.400 7.200M-2 150.500h3.600" fill="none" stroke="#c8484c" stroke-width="1.300"/>
<rect x="-2" y="159.800" width="6.600" height="8.200" fill="#c4ddb0" stroke="#9aa4b0" stroke-width="0.700"/><circle cx="1.500" cy="163.500" r="1.500" fill="#7aa8dc"/>
<rect x="-2" y="174" width="6" height="3.600" fill="#f6f6f0" stroke="#a4a6b0" stroke-width="0.600"/><rect x="-2" y="177.600" width="7" height="5" fill="#f5e48e" stroke="#c4ac50" stroke-width="0.600"/>
<path d="M3 190.300h-5l3 3.400-3 3.400h5" fill="none" stroke="#667" stroke-width="0.900"/>
<rect x="-3" y="204.300" width="7.200" height="7.600" fill="#eef3fc" stroke="#6f8cd0" stroke-width="0.900"/><path d="M-1.500 208l1.800 2 3-4" fill="none" stroke="#445" stroke-width="0.900"/>
<path d="M-3 227l3.500-6 4 6z" fill="#f8de70" stroke="#ccaa40" stroke-width="0.600"/><circle cx="3.200" cy="219.500" r="1.700" fill="#86c468"/>
<rect x="-1" y="233.200" width="5.800" height="7" fill="#c0c2b8"/><path d="M0.800 233.500v5.500M2.800 233.500v5.500" stroke="#84867e" stroke-width="0.800"/>
</svg>
<div class="ab" style="left:9.500px;top:74.300px;width:99.500px;height:189px;background:#fefefb;border:0.800px solid #b0b1a9"></div>
<svg class="ab" style="left:0;top:70" width="112" height="200" viewBox="0 70 112 200">
<defs><linearGradient id="gcyl" x1="0" y1="0" x2="1" y2="0"><stop offset="0" stop-color="#f2c050"/><stop offset="0.45" stop-color="#fdeaa0"/><stop offset="1" stop-color="#dfa028"/></linearGradient></defs>
<path d="M18.400 86v5.400h6.600M18.400 91.400v6" stroke="#b0b2ab" stroke-width="0.800" fill="none" stroke-dasharray="1.200 0.500"/>
<path d="M22 100.800h4" stroke="#b0b2ab" stroke-width="0.800" stroke-dasharray="1.200 0.500"/>
<path d="M42.700 116.500v26.200h6M42.700 122.200h6M42.700 132.600h6" stroke="#b0b2ab" stroke-width="0.800" fill="none" stroke-dasharray="1.200 0.500"/>
<path d="M14.800 77.400h5.600l2.200 2.200v5.900h-7.800z" fill="#fdfdfb" stroke="#9aa4c0" stroke-width="0.700"/><rect x="16" y="79" width="2.300" height="2.300" fill="#5f8ae0"/><rect x="18.300" y="81.300" width="2.600" height="2.600" fill="#f0b030"/>
<path d="M26.900 88.600v6.200a3.600 1.400 0 0 0 7.200 0v-6.200z" fill="url(#gcyl)" stroke="#c08a20" stroke-width="0.500"/><ellipse cx="30.500" cy="88.600" rx="3.600" ry="1.400" fill="#fbe9a0" stroke="#c08a20" stroke-width="0.500"/>
<path d="M16 99.300l2.500 2.600 2.500-2.600" fill="none" stroke="#444" stroke-width="1.200"/>
<path d="M27.200 110.200l2.500 2.600 2.500-2.600" fill="none" stroke="#444" stroke-width="1.200"/>
<rect x="27.300" y="97.800" width="7.400" height="7.900" fill="url(#gp2)" stroke="#8e99cf" stroke-width="0.700"/>
<rect x="35.700" y="107.400" width="57.300" height="8.800" fill="#dde0da"/>
<rect x="37.800" y="109.500" width="8.600" height="4.800" fill="#9db8f0" stroke="#6f8cd0" stroke-width="0.500"/><rect x="38.600" y="111" width="7" height="1.600" fill="#f4f7fd"/>
<rect x="50" y="119" width="0.7" height="6.4" fill="#70747a"/>
<rect x="51.5" y="119" width="0.9" height="4.5" fill="#70747a"/>
<rect x="53" y="119" width="0.7" height="6.4" fill="#70747a"/>
<rect x="54.8" y="119" width="0.9" height="4.5" fill="#70747a"/>
<rect x="56.4" y="119" width="0.7" height="4.5" fill="#70747a"/>
<rect x="58" y="119" width="0.9" height="6.4" fill="#70747a"/>
<rect x="51.500" y="124.300" width="1" height="1" fill="#70747a"/><rect x="54.800" y="124.300" width="1" height="1" fill="#70747a"/><rect x="56.400" y="124.300" width="1" height="1" fill="#70747a"/>
<rect x="10.300" y="252.800" width="98.300" height="10.300" fill="#fbfbf7"/><rect x="21.700" y="253.600" width="56.800" height="8.800" fill="#c9cbc1"/>
<path d="M17.300 255.600l-2.400 2.400 2.400 2.400" fill="none" stroke="#444" stroke-width="1.300"/><path d="M101.800 255.600l2.400 2.400-2.400 2.400" fill="none" stroke="#444" stroke-width="1.300"/>
<path d="M98.500 244l2.600 2.600-2.600 2.600M101.500 244l2.600 2.600-2.600 2.600" fill="none" stroke="#b4b6ad" stroke-width="1.200"/>
</svg>
<svg width="0" height="0" class="ab"><defs><linearGradient id="gp2" x1="0" y1="0" x2="1" y2="1"><stop offset="0" stop-color="#ffffff"/><stop offset="1" stop-color="#cfd4f3"/></linearGradient></defs></svg>
<div class="t" style="left:26.2px;top:76.40px;font-size:7.3px;color:#2a303c;letter-spacing:-0.185px;">Report</div>
<div class="t" style="left:38.3px;top:86.60px;font-size:7.3px;color:#2a303c;letter-spacing:-0.255px;">Data</div>
<div class="t" style="left:38.3px;top:96.70px;font-size:7.3px;color:#2a303c;letter-spacing:-0.402px;">Page1</div>
<div class="t" style="left:49.6px;top:107.00px;font-size:7.3px;color:#2a303c;letter-spacing:-0.172px;">MasterData1</div>
<div class="t" style="left:62px;top:117.40px;font-size:7.3px;color:#2a303c;letter-spacing:-0.309px;">BarCode1</div>
<div class="t" style="left:62px;top:127.70px;font-size:7.3px;color:#2a303c;letter-spacing:-0.129px;">barcode_printp</div>
<div class="t" style="left:62px;top:137.80px;font-size:7.3px;color:#2a303c;letter-spacing:-0.129px;">barcode_printd</div>
<div class="t" style="left:51px;top:127.70px;font-size:9px;color:#c8383c;font-weight:bold;font-family:'Liberation Serif',serif;">A</div>
<div class="t" style="left:51px;top:137.80px;font-size:9px;color:#c8383c;font-weight:bold;font-family:'Liberation Serif',serif;">A</div>
<div class="ab" style="left:9.500px;top:277.600px;width:99.700px;height:11.800px;background:#fff;border:0.800px solid #b0b1a9"></div>
<div class="t" style="left:11.8px;top:278.80px;font-size:7.3px;color:#2a303c;letter-spacing:-0.141px;">MasterData1: TfrxMasterDa</div>
<svg class="ab" style="left:100px;top:280px" width="10" height="8" viewBox="100 280 10 8"><path d="M102.200 282.600l2.500 2.600 2.500-2.600" fill="none" stroke="#555" stroke-width="0.900"/></svg>
<svg class="ab" style="left:0;top:295" width="112" height="14" viewBox="0 295 112 14">
<path d="M52.500 307.800l2-9.400q.3-1 1.400-1h21q1 0 1.400 1l2.700 9.400z" fill="#fcfcf5" stroke="#b9b9ae" stroke-width="0.700"/>
<path d="M14.300 308.200l2.300-9.800q.3-1 1.400-1h30.500q1 0 1.400 1l2.700 9.800z" fill="#ffffff" stroke="#a9a99e" stroke-width="0.700"/>
</svg>
<div class="t" style="left:17.8px;top:298.20px;font-size:7.3px;color:#2e3442;letter-spacing:-0.267px;">Properties</div>
<div class="t" style="left:55px;top:298.20px;font-size:7.3px;color:#3a4150;letter-spacing:-0.220px;">Events</div>
<div class="ab" style="left:9.500px;top:307.600px;width:99.700px;height:230px;background:#fff;border:0.800px solid #b0b1a9"></div>
<div class="ab" style="left:99.5px;top:308.4px;width:9.4px;height:227px;background:#f3f3ed;"></div>
<div class="ab" style="left:99.7px;top:320px;width:8.8px;height:156px;background:#c9cbc1;"></div>
<svg class="ab" style="left:99px;top:309px" width="10" height="10" viewBox="99 309 10 10"><path d="M101.500 315.200l2.600-2.700 2.600 2.700" fill="none" stroke="#444" stroke-width="1.300"/></svg>
<div class="t" style="left:18.3px;top:308.90px;font-size:6.7px;color:#2e3440;">AllowMirrorMo</div>
<div class="ab" style="left:60.5px;top:308.9px;width:39px;height:10px;background:#fff;"></div>
<div class="ab" style="left:62px;top:310.3px;width:5px;height:5px;border:0.700px solid #cdcfc8;background:#fff"></div>
<div class="t" style="left:70.5px;top:308.90px;font-size:6.6px;color:#2b3590;">False</div>
<div class="t" style="left:18.3px;top:319.13px;font-size:6.7px;color:#2e3440;">AllowSplit</div>
<div class="ab" style="left:60.5px;top:319.13px;width:39px;height:10px;background:#fff;"></div>
<div class="ab" style="left:62px;top:320.5px;width:5px;height:5px;border:0.700px solid #cdcfc8;background:#fff"></div>
<div class="t" style="left:70.5px;top:319.13px;font-size:6.6px;color:#2b3590;">False</div>
<div class="t" style="left:18.3px;top:329.36px;font-size:6.7px;color:#2e3440;">Child</div>
<div class="ab" style="left:60.5px;top:329.35999999999996px;width:39px;height:10px;background:#fff;"></div>
<div class="t" style="left:18.3px;top:339.59px;font-size:6.7px;color:#2e3440;">ColumnGap</div>
<div class="ab" style="left:60.5px;top:339.59px;width:39px;height:10px;background:#fff;"></div>
<div class="t" style="left:61.800px;top:339.6px;width:37.500px;overflow:hidden;font-size:6.85px;color:#2b3590;">0</div>
<div class="t" style="left:18.3px;top:349.82px;font-size:6.7px;color:#2e3440;">Columns</div>
<div class="ab" style="left:60.5px;top:349.82px;width:39px;height:10px;background:#fff;"></div>
<div class="t" style="left:61.800px;top:349.8px;width:37.500px;overflow:hidden;font-size:6.85px;color:#2b3590;">0</div>
<div class="t" style="left:18.3px;top:360.05px;font-size:6.7px;color:#2e3440;">ColumnWidth</div>
<div class="ab" style="left:60.5px;top:360.04999999999995px;width:39px;height:10px;background:#fff;"></div>
<div class="t" style="left:61.800px;top:360.0px;width:37.500px;overflow:hidden;font-size:6.85px;color:#2b3590;">0</div>
<div class="t" style="left:18.3px;top:370.28px;font-size:6.7px;color:#2e3440;">DataSet</div>
<div class="ab" style="left:60.5px;top:370.28px;width:39px;height:10px;background:#fff;"></div>
<div class="t" style="left:61.800px;top:370.3px;width:37.500px;overflow:hidden;font-size:6.85px;color:#2b3590;">barcode_pri</div>
<div class="t" style="left:18.3px;top:380.51px;font-size:6.7px;color:#2e3440;">Description</div>
<div class="ab" style="left:60.5px;top:380.51px;width:39px;height:10px;background:#fff;"></div>
<div class="ab" style="left:11.800px;top:393.3px;width:3.800px;height:3.800px;border:0.600px solid #b4b6ae;background:#fff"></div>
<div class="ab" style="left:12.9px;top:395.54px;width:2.8px;height:0.6px;background:#80848c;"></div>
<div class="ab" style="left:14px;top:394.44px;width:0.6px;height:2.8px;background:#80848c;"></div>
<div class="t" style="left:18.3px;top:390.74px;font-size:6.7px;color:#2e3440;">Fill</div>
<div class="ab" style="left:60.5px;top:390.74px;width:39px;height:10px;background:#fff;"></div>
<div class="t" style="left:61.800px;top:390.7px;width:37.500px;overflow:hidden;font-size:6.85px;color:#2b3590;">(TfrxCustom</div>
<div class="ab" style="left:11.800px;top:403.6px;width:3.800px;height:3.800px;border:0.600px solid #b4b6ae;background:#fff"></div>
<div class="ab" style="left:12.9px;top:405.77px;width:2.8px;height:0.6px;background:#80848c;"></div>
<div class="ab" style="left:14px;top:404.66999999999996px;width:0.6px;height:2.8px;background:#80848c;"></div>
<div class="t" style="left:18.3px;top:400.97px;font-size:6.7px;color:#2e3440;">FillGap</div>
<div class="ab" style="left:60.5px;top:400.96999999999997px;width:39px;height:10px;background:#fff;"></div>
<div class="t" style="left:61.800px;top:401.0px;width:37.500px;overflow:hidden;font-size:6.85px;color:#2b3590;">(TfrxFillGaps</div>
<div class="t" style="left:18.3px;top:411.20px;font-size:6.7px;color:#2e3440;">FillType</div>
<div class="ab" style="left:60.5px;top:411.2px;width:39px;height:10px;background:#fff;"></div>
<div class="t" style="left:61.800px;top:411.2px;width:37.500px;overflow:hidden;font-size:6.85px;color:#2b3590;">ftBrush</div>
<div class="t" style="left:18.3px;top:421.43px;font-size:6.7px;color:#2e3440;">Filter</div>
<div class="ab" style="left:60.5px;top:421.42999999999995px;width:39px;height:10px;background:#fff;"></div>
<div class="ab" style="left:11.800px;top:434.3px;width:3.800px;height:3.800px;border:0.600px solid #b4b6ae;background:#fff"></div>
<div class="ab" style="left:12.9px;top:436.46px;width:2.8px;height:0.6px;background:#80848c;"></div>
<div class="ab" style="left:14px;top:435.35999999999996px;width:0.6px;height:2.8px;background:#80848c;"></div>
<div class="t" style="left:18.3px;top:431.66px;font-size:6.7px;color:#2e3440;">Font</div>
<div class="ab" style="left:60.5px;top:431.65999999999997px;width:39px;height:10px;background:#fff;"></div>
<div class="t" style="left:61.800px;top:431.7px;width:37.500px;overflow:hidden;font-size:6.85px;color:#2b3590;">(TFont)</div>
<div class="t" style="left:18.3px;top:441.89px;font-size:6.7px;color:#2e3440;">FooterAfterEa</div>
<div class="ab" style="left:60.5px;top:441.89px;width:39px;height:10px;background:#fff;"></div>
<div class="ab" style="left:62px;top:443.3px;width:5px;height:5px;border:0.700px solid #cdcfc8;background:#fff"></div>
<div class="t" style="left:70.5px;top:441.89px;font-size:6.6px;color:#2b3590;">False</div>
<div class="ab" style="left:11.800px;top:454.7px;width:3.800px;height:3.800px;border:0.600px solid #b4b6ae;background:#fff"></div>
<div class="ab" style="left:12.9px;top:456.92px;width:2.8px;height:0.6px;background:#80848c;"></div>
<div class="ab" style="left:14px;top:455.82px;width:0.6px;height:2.8px;background:#80848c;"></div>
<div class="t" style="left:18.3px;top:452.12px;font-size:6.7px;color:#2e3440;">Frame</div>
<div class="ab" style="left:60.5px;top:452.12px;width:39px;height:10px;background:#fff;"></div>
<div class="t" style="left:61.800px;top:452.1px;width:37.500px;overflow:hidden;font-size:6.85px;color:#2b3590;">(TfrxFrame)</div>
<div class="t" style="left:18.3px;top:462.35px;font-size:6.85px;color:#1e2430;font-weight:bold;">Height</div>
<div class="ab" style="left:60.5px;top:462.35px;width:39px;height:10px;background:#fff;"></div>
<div class="t" style="left:61.800px;top:462.4px;width:37.500px;overflow:hidden;font-size:7.4px;color:#2b3590;font-weight:bold;">4,50</div>
<div class="t" style="left:18.3px;top:472.58px;font-size:6.7px;color:#2e3440;">IndexTag</div>
<div class="ab" style="left:60.5px;top:472.58px;width:39px;height:10px;background:#fff;"></div>
<div class="t" style="left:61.800px;top:472.6px;width:37.500px;overflow:hidden;font-size:6.85px;color:#2b3590;">0</div>
<div class="t" style="left:18.3px;top:482.81px;font-size:6.7px;color:#2e3440;">KeepChild</div>
<div class="ab" style="left:60.5px;top:482.80999999999995px;width:39px;height:10px;background:#fff;"></div>
<div class="ab" style="left:62px;top:484.2px;width:5px;height:5px;border:0.700px solid #cdcfc8;background:#fff"></div>
<div class="t" style="left:70.5px;top:482.81px;font-size:6.6px;color:#2b3590;">False</div>
<div class="t" style="left:18.3px;top:493.04px;font-size:6.7px;color:#2e3440;">KeepFooter</div>
<div class="ab" style="left:60.5px;top:493.03999999999996px;width:39px;height:10px;background:#fff;"></div>
<div class="ab" style="left:62px;top:494.4px;width:5px;height:5px;border:0.700px solid #cdcfc8;background:#fff"></div>
<div class="t" style="left:70.5px;top:493.04px;font-size:6.6px;color:#2b3590;">False</div>
<div class="t" style="left:18.3px;top:503.27px;font-size:6.7px;color:#2e3440;">KeepHeader</div>
<div class="ab" style="left:60.5px;top:503.27px;width:39px;height:10px;background:#fff;"></div>
<div class="ab" style="left:62px;top:504.7px;width:5px;height:5px;border:0.700px solid #cdcfc8;background:#fff"></div>
<div class="t" style="left:70.5px;top:503.27px;font-size:6.6px;color:#2b3590;">False</div>
<div class="t" style="left:18.3px;top:513.50px;font-size:6.7px;color:#2e3440;">KeepTogether</div>
<div class="ab" style="left:60.5px;top:513.5px;width:39px;height:10px;background:#fff;"></div>
<div class="ab" style="left:62px;top:514.9px;width:5px;height:5px;border:0.700px solid #cdcfc8;background:#fff"></div>
<div class="t" style="left:70.5px;top:513.50px;font-size:6.6px;color:#2b3590;">False</div>
<div class="t" style="left:18.3px;top:523.73px;font-size:6.85px;color:#1e2430;font-weight:bold;">Left</div>
<div class="ab" style="left:60.5px;top:523.73px;width:39px;height:10px;background:#fff;"></div>
<div class="t" style="left:61.800px;top:523.7px;width:37.500px;overflow:hidden;font-size:7.4px;color:#2b3590;font-weight:bold;">0</div>
<div class="ab" style="left:109.8px;top:324.0px;width:2px;height:1.4px;background:#a4afc0;"></div>
<div class="ab" style="left:109.8px;top:326.7px;width:2px;height:1.4px;background:#a4afc0;"></div>
<div class="ab" style="left:109.8px;top:329.4px;width:2px;height:1.4px;background:#a4afc0;"></div>
<div class="ab" style="left:109.8px;top:332.1px;width:2px;height:1.4px;background:#a4afc0;"></div>
<div class="ab" style="left:109.8px;top:334.8px;width:2px;height:1.4px;background:#a4afc0;"></div>
<div class="ab" style="left:109.8px;top:337.5px;width:2px;height:1.4px;background:#a4afc0;"></div>
<div class="ab" style="left:109.8px;top:340.2px;width:2px;height:1.4px;background:#a4afc0;"></div>
<div class="ab" style="left:109.8px;top:342.9px;width:2px;height:1.4px;background:#a4afc0;"></div>
<svg class="ab" style="left:110px;top:65px;overflow:hidden" width="485" height="470" viewBox="110 65 485 470">
<path d="M135.700 68v8.800" stroke="#555d6c" stroke-width="0.900"/>
<rect x="147.8" y="71.800" width="1" height="2.600" fill="#4a5262"/>
<rect x="120.200" y="100.5" width="2.600" height="1" fill="#4a5262"/>
<rect x="171.9" y="71.800" width="1" height="2.600" fill="#4a5262"/>
<rect x="120.200" y="124.6" width="2.600" height="1" fill="#4a5262"/>
<rect x="196.1" y="71.800" width="1" height="2.600" fill="#4a5262"/>
<rect x="120.200" y="148.7" width="2.600" height="1" fill="#4a5262"/>
<rect x="220.2" y="71.800" width="1" height="2.600" fill="#4a5262"/>
<rect x="120.200" y="172.7" width="2.600" height="1" fill="#4a5262"/>
<rect x="244.4" y="71.800" width="1" height="2.600" fill="#4a5262"/>
<rect x="120.200" y="196.8" width="2.600" height="1" fill="#4a5262"/>
<rect x="268.5" y="71.800" width="1" height="2.600" fill="#4a5262"/>
<rect x="120.200" y="220.9" width="2.600" height="1" fill="#4a5262"/>
<rect x="292.7" y="71.800" width="1" height="2.600" fill="#4a5262"/>
<rect x="120.200" y="245.0" width="2.600" height="1" fill="#4a5262"/>
<rect x="316.8" y="71.800" width="1" height="2.600" fill="#4a5262"/>
<rect x="120.200" y="269.0" width="2.600" height="1" fill="#4a5262"/>
<rect x="341.0" y="71.800" width="1" height="2.600" fill="#4a5262"/>
<rect x="120.200" y="293.1" width="2.600" height="1" fill="#4a5262"/>
<rect x="365.1" y="71.800" width="1" height="2.600" fill="#4a5262"/>
<rect x="120.200" y="317.2" width="2.600" height="1" fill="#4a5262"/>
<rect x="389.3" y="71.800" width="1" height="2.600" fill="#4a5262"/>
<rect x="120.200" y="341.2" width="2.600" height="1" fill="#4a5262"/>
<rect x="413.4" y="71.800" width="1" height="2.600" fill="#4a5262"/>
<rect x="120.200" y="365.3" width="2.600" height="1" fill="#4a5262"/>
<rect x="437.6" y="71.800" width="1" height="2.600" fill="#4a5262"/>
<rect x="120.200" y="389.4" width="2.600" height="1" fill="#4a5262"/>
<rect x="461.7" y="71.800" width="1" height="2.600" fill="#4a5262"/>
<rect x="120.200" y="413.4" width="2.600" height="1" fill="#4a5262"/>
<rect x="485.9" y="71.800" width="1" height="2.600" fill="#4a5262"/>
<rect x="120.200" y="437.5" width="2.600" height="1" fill="#4a5262"/>
<rect x="510.0" y="71.800" width="1" height="2.600" fill="#4a5262"/>
<rect x="120.200" y="461.6" width="2.600" height="1" fill="#4a5262"/>
<rect x="534.2" y="71.800" width="1" height="2.600" fill="#4a5262"/>
<rect x="120.200" y="485.7" width="2.600" height="1" fill="#4a5262"/>
<rect x="558.3" y="71.800" width="1" height="2.600" fill="#4a5262"/>
<rect x="120.200" y="509.7" width="2.600" height="1" fill="#4a5262"/>
<rect x="582.5" y="71.800" width="1" height="2.600" fill="#4a5262"/>
<rect x="120.200" y="533.8" width="2.600" height="1" fill="#4a5262"/>
<text x="160.3" y="75.200" font-size="5.600" fill="#2f3a52" text-anchor="middle" font-family="Liberation Sans, sans-serif">1</text>
<text transform="translate(122.800 113.1) rotate(-90)" font-size="5.600" fill="#2f3a52" text-anchor="middle" font-family="Liberation Sans, sans-serif">1</text>
<text x="184.5" y="75.200" font-size="5.600" fill="#2f3a52" text-anchor="middle" font-family="Liberation Sans, sans-serif">2</text>
<text transform="translate(122.800 137.1) rotate(-90)" font-size="5.600" fill="#2f3a52" text-anchor="middle" font-family="Liberation Sans, sans-serif">2</text>
<text x="208.6" y="75.200" font-size="5.600" fill="#2f3a52" text-anchor="middle" font-family="Liberation Sans, sans-serif">3</text>
<text transform="translate(122.800 161.2) rotate(-90)" font-size="5.600" fill="#2f3a52" text-anchor="middle" font-family="Liberation Sans, sans-serif">3</text>
<text x="232.8" y="75.200" font-size="5.600" fill="#2f3a52" text-anchor="middle" font-family="Liberation Sans, sans-serif">4</text>
<text transform="translate(122.800 185.3) rotate(-90)" font-size="5.600" fill="#2f3a52" text-anchor="middle" font-family="Liberation Sans, sans-serif">4</text>
<text x="256.9" y="75.200" font-size="5.600" fill="#2f3a52" text-anchor="middle" font-family="Liberation Sans, sans-serif">5</text>
<text transform="translate(122.800 209.3) rotate(-90)" font-size="5.600" fill="#2f3a52" text-anchor="middle" font-family="Liberation Sans, sans-serif">5</text>
<text x="281.1" y="75.200" font-size="5.600" fill="#2f3a52" text-anchor="middle" font-family="Liberation Sans, sans-serif">6</text>
<text transform="translate(122.800 233.4) rotate(-90)" font-size="5.600" fill="#2f3a52" text-anchor="middle" font-family="Liberation Sans, sans-serif">6</text>
<text x="305.2" y="75.200" font-size="5.600" fill="#2f3a52" text-anchor="middle" font-family="Liberation Sans, sans-serif">7</text>
<text transform="translate(122.800 257.5) rotate(-90)" font-size="5.600" fill="#2f3a52" text-anchor="middle" font-family="Liberation Sans, sans-serif">7</text>
<text x="329.4" y="75.200" font-size="5.600" fill="#2f3a52" text-anchor="middle" font-family="Liberation Sans, sans-serif">8</text>
<text transform="translate(122.800 281.6) rotate(-90)" font-size="5.600" fill="#2f3a52" text-anchor="middle" font-family="Liberation Sans, sans-serif">8</text>
<text x="353.5" y="75.200" font-size="5.600" fill="#2f3a52" text-anchor="middle" font-family="Liberation Sans, sans-serif">9</text>
<text transform="translate(122.800 305.6) rotate(-90)" font-size="5.600" fill="#2f3a52" text-anchor="middle" font-family="Liberation Sans, sans-serif">9</text>
<text x="377.7" y="75.200" font-size="5.600" fill="#2f3a52" text-anchor="middle" font-family="Liberation Sans, sans-serif">10</text>
<text transform="translate(122.800 329.7) rotate(-90)" font-size="5.600" fill="#2f3a52" text-anchor="middle" font-family="Liberation Sans, sans-serif">10</text>
<text x="401.8" y="75.200" font-size="5.600" fill="#2f3a52" text-anchor="middle" font-family="Liberation Sans, sans-serif">11</text>
<text transform="translate(122.800 353.8) rotate(-90)" font-size="5.600" fill="#2f3a52" text-anchor="middle" font-family="Liberation Sans, sans-serif">11</text>
<text x="426.0" y="75.200" font-size="5.600" fill="#2f3a52" text-anchor="middle" font-family="Liberation Sans, sans-serif">12</text>
<text transform="translate(122.800 377.8) rotate(-90)" font-size="5.600" fill="#2f3a52" text-anchor="middle" font-family="Liberation Sans, sans-serif">12</text>
<text x="450.1" y="75.200" font-size="5.600" fill="#2f3a52" text-anchor="middle" font-family="Liberation Sans, sans-serif">13</text>
<text transform="translate(122.800 401.9) rotate(-90)" font-size="5.600" fill="#2f3a52" text-anchor="middle" font-family="Liberation Sans, sans-serif">13</text>
<text x="474.3" y="75.200" font-size="5.600" fill="#2f3a52" text-anchor="middle" font-family="Liberation Sans, sans-serif">14</text>
<text transform="translate(122.800 426.0) rotate(-90)" font-size="5.600" fill="#2f3a52" text-anchor="middle" font-family="Liberation Sans, sans-serif">14</text>
<text x="498.4" y="75.200" font-size="5.600" fill="#2f3a52" text-anchor="middle" font-family="Liberation Sans, sans-serif">15</text>
<text transform="translate(122.800 450.1) rotate(-90)" font-size="5.600" fill="#2f3a52" text-anchor="middle" font-family="Liberation Sans, sans-serif">15</text>
<text x="522.6" y="75.200" font-size="5.600" fill="#2f3a52" text-anchor="middle" font-family="Liberation Sans, sans-serif">16</text>
<text transform="translate(122.800 474.1) rotate(-90)" font-size="5.600" fill="#2f3a52" text-anchor="middle" font-family="Liberation Sans, sans-serif">16</text>
<text x="546.8" y="75.200" font-size="5.600" fill="#2f3a52" text-anchor="middle" font-family="Liberation Sans, sans-serif">17</text>
<text transform="translate(122.800 498.2) rotate(-90)" font-size="5.600" fill="#2f3a52" text-anchor="middle" font-family="Liberation Sans, sans-serif">17</text>
<text x="570.9" y="75.200" font-size="5.600" fill="#2f3a52" text-anchor="middle" font-family="Liberation Sans, sans-serif">18</text>
<text transform="translate(122.800 522.3) rotate(-90)" font-size="5.600" fill="#2f3a52" text-anchor="middle" font-family="Liberation Sans, sans-serif">18</text>
<text x="595.0" y="75.200" font-size="5.600" fill="#2f3a52" text-anchor="middle" font-family="Liberation Sans, sans-serif">19</text>
</svg>
<div class="ab" style="left:134.5px;top:87.1px;width:137.2px;height:11px;background:#efa93a;"></div>
<div class="ab" style="left:134.5px;top:98px;width:137px;height:64.8px;background:#fdfdf9;"></div>
<svg class="ab" style="left:130px;top:85px" width="150" height="82" viewBox="130 85 150 82">
<path d="M158.7 98v64.600" stroke="#ecece4" stroke-width="0.700"/>
<path d="M182.8 98v64.600" stroke="#ecece4" stroke-width="0.700"/>
<path d="M206.9 98v64.600" stroke="#ecece4" stroke-width="0.700"/>
<path d="M231.1 98v64.600" stroke="#ecece4" stroke-width="0.700"/>
<path d="M255.2 98v64.600" stroke="#ecece4" stroke-width="0.700"/>
<path d="M134.500 122.1h137" stroke="#ecece4" stroke-width="0.700"/>
<path d="M134.500 146.2h137" stroke="#ecece4" stroke-width="0.700"/>
<rect x="161.42" y="105.800" width="2.33" height="28.900" fill="#151515"/>
<rect x="165.27" y="105.800" width="1.40" height="28.900" fill="#2a2a2a"/>
<rect x="167.60" y="105.800" width="2.10" height="28.900" fill="#151515"/>
<rect x="170.64" y="105.800" width="1.87" height="28.900" fill="#262626"/>
<rect x="173.67" y="105.800" width="2.45" height="28.900" fill="#151515"/>
<rect x="177.05" y="105.800" width="1.28" height="28.900" fill="#333"/>
<rect x="179.04" y="105.800" width="2.33" height="28.900" fill="#151515"/>
<rect x="182.54" y="105.800" width="1.63" height="28.900" fill="#2a2a2a"/>
<rect x="185.46" y="105.800" width="1.40" height="28.900" fill="#2a2a2a"/>
<rect x="188.14" y="105.800" width="1.98" height="28.900" fill="#1a1a1a"/>
<rect x="191.87" y="105.800" width="1.40" height="28.900" fill="#3a3a3a"/>
<rect x="193.62" y="105.800" width="1.40" height="28.900" fill="#444"/>
<rect x="195.37" y="105.800" width="1.17" height="28.900" fill="#3a3a3a"/>
<rect x="199.11" y="105.800" width="1.98" height="28.900" fill="#686868"/>
<rect x="202.14" y="105.800" width="1.40" height="28.900" fill="#383838"/>
<rect x="204.47" y="105.800" width="1.98" height="28.900" fill="#2a2a2a"/>
<rect x="207.16" y="105.800" width="1.63" height="28.900" fill="#2a2a2a"/>
<rect x="209.73" y="105.800" width="1.40" height="28.900" fill="#4a4a4a"/>
<rect x="212.06" y="105.800" width="1.98" height="28.900" fill="#151515"/>
<rect x="215.21" y="105.800" width="1.87" height="28.900" fill="#151515"/>
<path d="M161.300 106.300l3.200 2.400-3.200 2.400z" fill="#e01818"/>
<rect x="133.5" y="97.3" width="2" height="2" fill="#1a2a55"/>
<rect x="202.0" y="97.3" width="2" height="2" fill="#1a2a55"/>
<rect x="270.3" y="97.3" width="2" height="2" fill="#1a2a55"/>
<rect x="133.5" y="152.3" width="2" height="2" fill="#1a2a55"/>
<rect x="270.3" y="152.3" width="2" height="2" fill="#1a2a55"/>
<path d="M139.3 149.10000000000002v-2.8h2.8M233.7 146.3h2.8v2.8M139.3 154.2v2.8h2.8M233.7 157h2.8v-2.8" fill="none" stroke="#333" stroke-width="0.900"/>
<path d="M238.5 152.60000000000002v-2.8h2.8M267.2 149.8h2.8v2.8M238.5 159.0v2.8h2.8M267.2 161.8h2.8v-2.8" fill="none" stroke="#333" stroke-width="0.900"/>
<path d="M218 90.500v5.500a3.200 1.200 0 0 0 6.400 0v-5.500z" fill="#f6e08a" stroke="#d9a83a" stroke-width="0.500"/><ellipse cx="221.200" cy="90.500" rx="3.200" ry="1.200" fill="#fdf3c0" stroke="#d9a83a" stroke-width="0.500"/>
</svg>
<div class="t" style="left:138.6px;top:87.80px;font-size:7.6px;color:#1c1606;font-weight:bold;letter-spacing:0.036px;">MasterData:</div>
<div class="t" style="left:185px;top:87.80px;font-size:7.5px;color:#1c1606;letter-spacing:-0.399px;">MasterDat</div>
<div class="t" style="left:226px;top:87.80px;font-size:7.5px;color:#1c1606;letter-spacing:-0.297px;">barcode_print</div>
<div class="t" style="left:172px;top:135.30px;font-size:7.2px;color:#222;letter-spacing:0.246px;">12345678</div>
<div class="t" style="left:141px;top:147.30px;font-size:9.2px;color:#3a3a3a;letter-spacing:-0.316px;">[barcode_print."descripti</div>
<div class="t" style="left:240px;top:150.80px;font-size:7.6px;color:#222;font-weight:bold;letter-spacing:-0.124px;">[barcod</div>
<div class="ab" style="left:311.3px;top:199.6px;width:175.9px;height:207.2px;background:#fcfcf5;border:0.700px solid #6b6e68;box-shadow:0 0 3px rgba(40,40,40,0.35)"></div>
<div class="ab" style="left:312.0px;top:200.29999999999998px;width:175.9px;height:13.5px;background:#fefefc;"></div>
<div class="t" style="left:313.4px;top:201.90px;font-size:7.4px;color:#3a4150;letter-spacing:0.147px;">Επιλογή Πίνακα Δεδομένων</div>
<svg class="ab" style="left:474px;top:202px" width="10" height="10" viewBox="474 202 10 10"><path d="M475.900 204.300l6.400 6.400M482.300 204.300l-6.400 6.400" stroke="#444" stroke-width="1"/></svg>
<div class="ab" style="left:316.800px;top:225px;width:165.600px;height:109.500px;border:0.700px solid #e2e2d8"></div>
<div class="ab" style="left:320.5px;top:221px;width:24px;height:8px;background:#fcfcf5;"></div>
<div class="t" style="left:321.7px;top:220.20px;font-size:7.3px;color:#2a2f3c;letter-spacing:-0.380px;">Dataset</div>
<div class="ab" style="left:324.800px;top:234.300px;width:150px;height:75px;background:#fefefb;border:0.700px solid #b2b0cc"></div>
<div class="ab" style="left:326px;top:246.5px;width:147.6px;height:10.9px;background:#0676de;"></div>
<div class="t" style="left:340.7px;top:236.20px;font-size:7.3px;color:#2a3040;letter-spacing:-0.182px;">[μη ορισμένο]</div>
<div class="t" style="left:340.7px;top:247.50px;font-size:7.3px;color:#ffffff;letter-spacing:-0.126px;">barcode_print</div>
<div class="t" style="left:340.7px;top:258.90px;font-size:7.3px;color:#2a3040;letter-spacing:-0.191px;">products_docs</div>
<div class="t" style="left:340.7px;top:270.40px;font-size:7.3px;color:#2a3040;letter-spacing:-0.179px;">products_items</div>
<div class="t" style="left:340.7px;top:281.80px;font-size:7.3px;color:#2a3040;letter-spacing:-0.054px;">products_print</div>
<svg class="ab" style="left:326px;top:246px" width="12" height="48" viewBox="326 246 12 48">
<path d="M328.600 249.7v5.300a3.400 1.300 0 0 0 6.800 0v-5.300z" fill="url(#gcyl)" stroke="#c9962a" stroke-width="0.500"/><ellipse cx="332" cy="249.7" rx="3.400" ry="1.300" fill="#fdf0b0" stroke="#c9962a" stroke-width="0.500"/>
<path d="M328.600 261.1v5.300a3.400 1.300 0 0 0 6.800 0v-5.300z" fill="url(#gcyl)" stroke="#c9962a" stroke-width="0.500"/><ellipse cx="332" cy="261.1" rx="3.400" ry="1.300" fill="#fdf0b0" stroke="#c9962a" stroke-width="0.500"/>
<path d="M328.600 272.6v5.300a3.400 1.300 0 0 0 6.800 0v-5.300z" fill="url(#gcyl)" stroke="#c9962a" stroke-width="0.500"/><ellipse cx="332" cy="272.6" rx="3.400" ry="1.300" fill="#fdf0b0" stroke="#c9962a" stroke-width="0.500"/>
<path d="M328.600 284.0v5.300a3.400 1.300 0 0 0 6.800 0v-5.300z" fill="url(#gcyl)" stroke="#c9962a" stroke-width="0.500"/><ellipse cx="332" cy="284.0" rx="3.400" ry="1.300" fill="#fdf0b0" stroke="#c9962a" stroke-width="0.500"/>
</svg>
<div class="t" style="left:363.3px;top:317.50px;font-size:7.3px;color:#2a2f3c;letter-spacing:-0.145px;">Αριθμός Εγγραφών:</div>
<div class="ab" style="left:439.300px;top:316px;width:25.500px;height:11.300px;background:#fff;border:0.700px solid #b9bbb4"></div>
<div class="t" style="left:441.7px;top:317.30px;font-size:7.3px;color:#2a3040;">0</div>
<div class="ab" style="left:467px;top:316px;width:7.600px;height:11.600px;background:#f1f1ea;border:0.600px solid #b5b7ae"></div>
<div class="ab" style="left:467.6px;top:322px;width:7.6px;height:0.6px;background:#b5b7ae;"></div>
<svg class="ab" style="left:467px;top:316px" width="9" height="13" viewBox="467 316 9 13"><path d="M469.600 320.400h3.400l-1.700-1.900zM469.600 324.300h3.400l-1.700 1.900z" fill="#333"/></svg>
<div class="ab" style="left:316.800px;top:345.300px;width:165.600px;height:30.200px;border:0.700px solid #e2e2d8"></div>
<div class="ab" style="left:320.5px;top:341px;width:17px;height:8px;background:#fcfcf5;"></div>
<div class="t" style="left:321.7px;top:340.60px;font-size:7.3px;color:#2a2f3c;letter-spacing:-0.287px;">Filter</div>
<div class="ab" style="left:324px;top:354px;width:151px;height:11.800px;background:#fff;border:0.800px solid #7ab4e6"></div>
<div class="ab" style="left:465.800px;top:356px;width:7.400px;height:8.200px;background:#ecece6;border:0.600px solid #a9aba4"></div>
<div class="ab" style="left:385.500px;top:387.500px;width:43.600px;height:13.200px;background:#ebebe7;border:1.200px solid #2f84d8"></div>
<div class="ab" style="left:387.600px;top:389.600px;width:40.400px;height:10px;border:0.600px dotted #8a8a8a"></div>
<div class="ab" style="left:436.700px;top:387.700px;width:44.800px;height:13.400px;background:#eeeee8;border:0.700px solid #b1b3ac"></div>
<div class="t" style="left:403.5px;top:390.00px;font-size:7.3px;color:#2a3040;letter-spacing:-0.274px;">OK</div>
<div class="t" style="left:448.7px;top:390.00px;font-size:7.3px;color:#2a3040;letter-spacing:-0.145px;">Ακυρο</div>
<svg class="ab" style="left:425px;top:191px" width="12" height="18" viewBox="425 191 12 18"><path d="M425.900 192.600v11.800l2.700-2.500 2 4.500 1.800-.8-2-4.400h3.700z" fill="#fff" stroke="#222" stroke-width="0.800"/></svg>
</div></body></html>
